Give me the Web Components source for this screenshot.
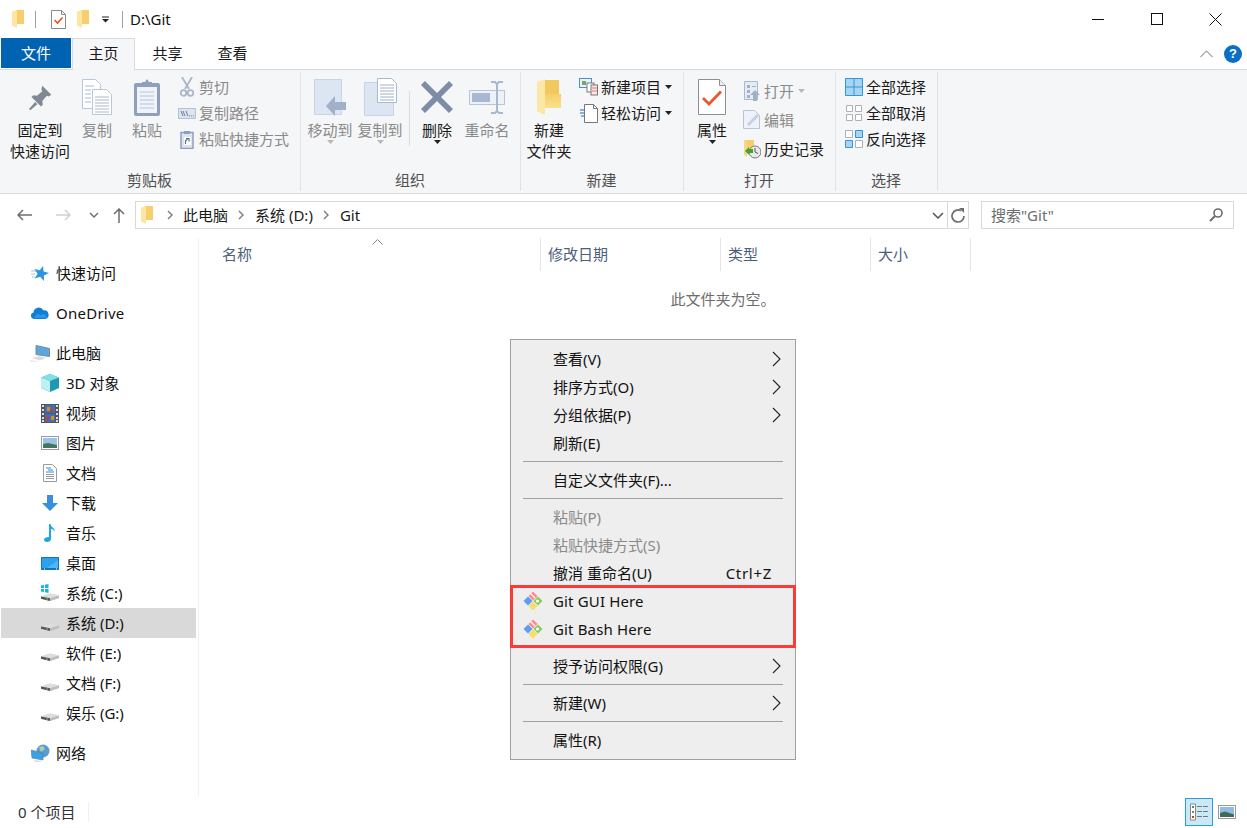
<!DOCTYPE html>
<html>
<head>
<meta charset="utf-8">
<title>D:\Git</title>
<style>
  html, body { margin: 0; height: 100%; background: #fff; overflow: hidden; }
  body { font: 15px/20px "Noto Sans", "Noto Sans CJK SC", sans-serif; color: #1a1a1a; }
</style>
</head>
<body>
<explorer-window>
  <title-bar slot="top"></title-bar>
  <ribbon-tabs slot="top"></ribbon-tabs>
  <ribbon-bar slot="top">
    <ribbon-group label="剪贴板" style="width:301px;padding-left:10px">
      <big-button icon="pin" style="width:60px">固定到<br>快速访问</big-button>
      <big-button icon="copy" off style="width:50px;margin-left:2px">复制</big-button>
      <big-button icon="paste" off style="width:50px">粘贴</big-button>
      <small-stack style="margin-left:5px;padding-top:4px">
        <small-button icon="cut" off>剪切</small-button>
        <small-button icon="copypath" off>复制路径</small-button>
        <small-button icon="pasteshort" off>粘贴快捷方式</small-button>
      </small-stack>
    </ribbon-group>
    <ribbon-group label="组织" style="width:220px;padding-left:5px">
      <big-button icon="moveto" off arrow style="width:48px">移动到</big-button>
      <big-button icon="copyto" off arrow style="width:50px;margin-left:1px">复制到</big-button>
      <ribbon-sep></ribbon-sep>
      <big-button icon="del" arrow style="width:50px;margin-left:2px">删除</big-button>
      <big-button icon="rename" off style="width:50px">重命名</big-button>
    </ribbon-group>
    <ribbon-group label="新建" style="width:163px;padding-left:5px">
      <big-button icon="bigfolder" style="width:46px">新建<br>文件夹</big-button>
      <small-stack style="margin-left:7px;padding-top:4px">
        <small-button icon="newitem" arrow="dark">新建项目</small-button>
        <small-button icon="easy" arrow="dark">轻松访问</small-button>
      </small-stack>
    </ribbon-group>
    <ribbon-group label="打开" style="width:152px;padding-left:12px">
      <big-button icon="props" arrow style="width:32px">属性</big-button>
      <small-stack tall style="margin-left:14px;padding-top:6px">
        <small-button icon="open" off arrow="light">打开</small-button>
        <small-button icon="edit" off>编辑</small-button>
        <small-button icon="history">历史记录</small-button>
      </small-stack>
    </ribbon-group>
    <ribbon-group label="选择" style="width:102px;padding-left:8px">
      <small-stack style="padding-top:4px">
        <small-button icon="selall">全部选择</small-button>
        <small-button icon="selnone">全部取消</small-button>
        <small-button icon="selinv">反向选择</small-button>
      </small-stack>
    </ribbon-group>
  </ribbon-bar>
  <address-row slot="top"></address-row>
  <nav-pane slot="side">
    <nav-item icon="star" gap>快速访问</nav-item>
    <nav-item icon="cloud" gap latin>OneDrive</nav-item>
    <nav-item icon="pc">此电脑</nav-item>
    <nav-item icon="cube" sub>3D 对象</nav-item>
    <nav-item icon="film" sub>视频</nav-item>
    <nav-item icon="photo" sub>图片</nav-item>
    <nav-item icon="docs" sub>文档</nav-item>
    <nav-item icon="down" sub>下载</nav-item>
    <nav-item icon="music" sub>音乐</nav-item>
    <nav-item icon="desk" sub>桌面</nav-item>
    <nav-item icon="cdrive" sub>系统 (C:)</nav-item>
    <nav-item icon="drive" sub selected>系统 (D:)</nav-item>
    <nav-item icon="drive" sub>软件 (E:)</nav-item>
    <nav-item icon="drive" sub>文档 (F:)</nav-item>
    <nav-item icon="drive" sub gap>娱乐 (G:)</nav-item>
    <nav-item icon="net">网络</nav-item>
  </nav-pane>
  <file-list slot="main"></file-list>
  <status-bar slot="bottom"></status-bar>
  <context-menu slot="over">
    <menu-row sub>查看(V)</menu-row>
    <menu-row sub>排序方式(O)</menu-row>
    <menu-row sub>分组依据(P)</menu-row>
    <menu-row>刷新(E)</menu-row>
    <menu-line></menu-line>
    <menu-row>自定义文件夹(F)...</menu-row>
    <menu-line></menu-line>
    <menu-row off>粘贴(P)</menu-row>
    <menu-row off>粘贴快捷方式(S)</menu-row>
    <menu-row keys="Ctrl+Z">撤消 重命名(U)</menu-row>
    <menu-mark>
      <menu-row git>Git GUI Here</menu-row>
      <menu-row git>Git Bash Here</menu-row>
    </menu-mark>
    <menu-row sub>授予访问权限(G)</menu-row>
    <menu-line></menu-line>
    <menu-row sub>新建(W)</menu-row>
    <menu-line></menu-line>
    <menu-row>属性(R)</menu-row>
  </context-menu>
</explorer-window>

<script>
// all the little pictures, each is [width, height, svg body]
const folderBody = '<path d="M4 0h8v14H4z" fill="#f6cf6c"/><path d="M0 1.500 5 0v18L0 15.500z" fill="#fde6a2"/>';
const driveBody = '<path d="M0 12.500 9 9.500 18 11.500v2.500L9 17 0 14.800z" fill="#c9c9c9"/><path d="M0 12.500 9 9.500 18 11.500 9 14.300z" fill="#dedede"/><path d="M0 12.500l9 1.800V17L0 14.800z" fill="#555"/><path d="M9 14.300 18 11.500V14L9 17z" fill="#bdbdbd"/><path d="M5 14.600h2v1H5z" fill="#6fc36f"/>';
const icons = {
  folder: [13, 18, folderBody],
  checkdoc: [15, 19, '<path d="M.5.5h10l4 4v14H.5z" fill="#fff" stroke="#8a8a8a"/><path d="M10.500.5v4h4" fill="none" stroke="#8a8a8a"/><path d="m3.500 10 3 3 5-5.500" fill="none" stroke="#e8501e" stroke-width="1.600"/>'],
  pin: [27, 27, '<g fill="#7f8a94" transform="scale(.9)"><path d="M17 2 27 12l-3 2-2-1-5 6 .5 4-2 2L5 14.500l2-2 4 .5 6-5-1-2z"/><path d="M9 20l2.500 2.500L4 29l-2-1z"/></g>'],
  copy: [30, 36, '<g stroke="#b9c7da" fill="#fff"><path d="M.5.5h13l5 5v24H.5z"/><path d="M10.500 10.500h14l5 5v20h-19z"/></g><path d="M3 7h9M3 11h6M3 15h6M3 19h6M3 23h6M13 18h14M13 21h14M13 24h14M13 27h14M13 30h14M13 33h14" stroke="#a9b9d0"/>'],
  paste: [26, 37, '<rect x="0" y="4" width="26" height="33" rx="2" fill="#8f9fbc"/><rect x="3" y="8" width="20" height="26" fill="#f0f4fa"/><path d="M6 13h14M6 17h14M6 21h14M6 25h14M6 29h14" stroke="#b4c2da"/><path d="M8 3h3l2-3 2 3h3v5H8z" fill="#8f9fbc"/>'],
  cut: [14, 20, '<g fill="none" stroke="#a9b6c9" stroke-width="1.800"><path d="M2 0l7 12M12 0 5 12"/><circle cx="3.500" cy="16" r="2.800"/><circle cx="10.500" cy="16" r="2.800"/></g>'],
  copypath: [18, 11, '<rect x=".5" y=".5" width="17" height="10" fill="#dde4ef" stroke="#b5c2d6"/><path d="M3 3l2 5M5 3l2 5M8 3l2 5" stroke="#6e7f9a"/><path d="M11 8h1M13 8h1M15 8h1" stroke="#6e7f9a"/>'],
  pasteshort: [14, 19, '<rect x="1" y="2.500" width="12" height="16" fill="#dce4f0" stroke="#8fa0bd" stroke-width="1.500"/><path d="M4 1h6v3H4z" fill="#8fa0bd"/><rect x="4" y="7" width="7" height="8" fill="#fff"/><path d="M5.500 14v-3l2-2M6 8.500h3v3" fill="none" stroke="#5c6f8f" stroke-width="1.200"/>'],
  moveto: [32, 37, '<path d="M.5.500h27v35H.5z" fill="#dce6f3" stroke="#c7d4e6"/><path d="M12 27 21 17v6h11v8H21v6z" fill="#9fb0c8"/>'],
  copyto: [33, 38, '<path d="M.5 4.500h29v33H.5z" fill="#dce6f3" stroke="#c7d4e6"/><path d="M13.500.500h14l5 5v19h-19z" fill="#fff" stroke="#a9b9d0"/><path d="M16 7h14M16 10h14M16 13h14M16 16h14M16 19h14M16 22h14" stroke="#9fb0c8"/>'],
  del: [32, 32, '<path d="M4 0 16 12 28 0l4 4-12 12 12 12-4 4-12-12L4 32l-4-4 12-12L0 4z" fill="#7f8ca8"/>'],
  rename: [36, 33, '<rect x=".5" y="9.500" width="35" height="14" fill="#edf2f8" stroke="#b7c5d9"/><rect x="3" y="12" width="18" height="9" fill="#a8b8d0"/><path d="M22 1h4l2 2 2-2h4M28 3v27M22 32h4l2-2 2 2h4" fill="none" stroke="#a8b8d0" stroke-width="2"/>'],
  bigfolder: [24, 36, '<defs><linearGradient id="bf" x2="0" y2="1"><stop offset="0" stop-color="#f6cf6c"/><stop offset="1" stop-color="#fbe08c"/></linearGradient></defs><path d="M7 1h15v28H7z" fill="#f3c95e"/><path d="M7 15h17v14H7z" fill="url(#bf)"/><path d="M0 3l8-3v36l-8-4z" fill="#fce7a6"/>'],
  newitem: [19, 18, '<rect x=".5" y=".5" width="12" height="9" fill="#e8f1fa" stroke="#4a93c9"/><rect x="3" y="3" width="4" height="4" fill="#7aa760"/><rect x="8" y="5" width="7" height="9" fill="#fff" stroke="#777"/><rect x="12" y="7" width="6.500" height="10" fill="#fde8e8" stroke="#777"/><path d="M13 10h5M13 13h5" stroke="#d77"/>'],
  easy: [18, 19, '<path d="M4.500.5h9l4 4v14h-13z" fill="#fff" stroke="#777"/><path d="M13.500.5v4h4" fill="none" stroke="#777"/><path d="M0 6h4M0 9h4M1 12h3" stroke="#1f6fb5"/>'],
  props: [28, 36, '<path d="M.5.500h21l6 6v29H.5z" fill="#fff" stroke="#8f8f8f"/><path d="M21.500.500v6h6" fill="#eee" stroke="#8f8f8f"/><path d="m5 19 6 6 12-12.500" fill="none" stroke="#e8582a" stroke-width="2.800"/>'],
  open: [16, 20, '<path d="M.5.500h13v18H.5z" fill="#e6ecf4" stroke="#a9b9d0"/><path d="M3 4h3v3H3zM3 9h3v3H3zM3 14h3v3H3zM8 5h4v1H8z" fill="#9fb0c8"/><path d="M11 9l5 5h-3v6H9v-6H6z" fill="#9fb0c8"/>'],
  edit: [18, 19, '<path d="M.5.500h11l5 5v13H.5z" fill="#eef2f8" stroke="#b7c5d9"/><path d="M4 14 14 4l2 2L6 16z" fill="#c3d0e2"/>'],
  history: [18, 20, '<path d="M1 1h3v17l-3-2z" fill="#f5d98a"/><path d="M4 1h7v12H4z" fill="#f6cf6c"/><circle cx="12" cy="13" r="6" fill="#e9e9e9" stroke="#777"/><path d="M12 9v4l3 1.500" fill="none" stroke="#555"/><path d="M2 12l4-4v2h4v4H6v2z" fill="#4aa02c"/>'],
  selall: [18, 18, '<path d="M.5.500h17v17H.5zM9 .5v17M.5 9h17" fill="#a8d4f2" stroke="#2f97df"/>'],
  selnone: [16, 16, '<path d="M.5.500h6v6h-6zM9.500.500h6v6h-6zM.5 9.500h6v6h-6zM9.500 9.500h6v6h-6z" fill="#fff" stroke="#b0b0b0"/>'],
  selinv: [18, 18, '<path d="M.5.500h7v7h-7zM10.500 10.500h7v7h-7z" fill="#fff" stroke="#b0b0b0"/><path d="M10.500.500h7v7h-7zM.5 10.500h7v7h-7z" fill="#a8d4f2" stroke="#2f97df"/>'],
  star: [18, 15, '<path d="M12 0 12.600 5.400 18 7 12.900 9.400 12.900 15 9.100 10.800 3.800 12.500 6.600 7.700 3.300 3.100 8.800 4.300z" fill="#2f94e0"/><path d="M0 5h5M0 8h4M1 11h3" stroke="#9ac8ec"/>'],
  cloud: [18, 12, '<path d="M3.500 12a3.300 3.300 0 0 1-1-6.500A5.200 5.200 0 0 1 12.300 3.300 4.500 4.500 0 0 1 14.500 12z" fill="#0f7ed6"/><path d="M2.500 11 6.500 6.500 9.500 8l4-1 3 4z" fill="#2b97ea"/>'],
  pc: [20, 17, '<path d="M6 .5 19.500 3.500v8L6 9.500z" fill="#5aa6e0" stroke="#7a8a96"/><path d="M2 13l7-2 7 2-6 2.500z" fill="#dcdcdc"/><path d="M0 15l6 .8 2 1L.5 17z" fill="#e9e9e9"/>'],
  cube: [18, 18, '<path d="M9 0 18 3.500V14L9 18 0 14V3.500z" fill="#1e9ab0"/><path d="M0 3.500 9 0l9 3.500L9 7z" fill="#7fe0e8"/><path d="M0 3.500 9 7v11L0 14z" fill="#bdf0f2"/>'],
  film: [18, 19, '<rect width="18" height="19" fill="#555"/><path d="M1 1h2v2H1zM1 5h2v2H1zM1 9h2v2H1zM1 13h2v2H1zM1 16h2v2H1zM15 1h2v2h-2zM15 5h2v2h-2zM15 9h2v2h-2zM15 13h2v2h-2zM15 16h2v2h-2z" fill="#ddd"/><rect x="4" y="1" width="10" height="8" fill="#3f6fb8"/><rect x="4" y="10" width="10" height="8" fill="#3f6fb8"/><path d="M6 3h3v4H6zM10 12h3v4h-3z" fill="#d98a2b"/><path d="M9 5h3v3H9zM5 13h3v4H5z" fill="#b5413a"/>'],
  photo: [18, 14, '<rect x=".5" y=".5" width="17" height="13" fill="#fff" stroke="#9a9a9a"/><rect x="2" y="2" width="14" height="10" fill="#9cc3e6"/><path d="M2 8l5-1 9 2v3H2z" fill="#45735f"/>'],
  docs: [14, 18, '<path d="M.5.500h9l4 4v13H.5z" fill="#fff" stroke="#9a9a9a"/><path d="M3 4h5M5 6h5M3 8h8" stroke="#2f8bd8"/><path d="M3 10.500h8M3 12.500h8M3 14.500h8" stroke="#999"/>'],
  down: [16, 16, '<path d="M5 0h6v8h5l-8 8-8-8h5z" fill="#3a8fdc"/>'],
  music: [12, 18, '<path d="M5 0h1.500c.3 3 4.500 4 4.500 8-1-2-2.500-3-4-3v10c0 2-2 3-4 3s-3-1-3-2.500S2 13 5 13z" fill="#1ea7e8"/>'],
  desk: [18, 13, '<rect width="18" height="13" fill="#1377bd"/><path d="M1 1h16v10H1z" fill="#2ea1ee"/><path d="M6 11 17 3v8z" fill="#52b4f3"/><path d="M3 12h1M15 12h1" stroke="#fff"/>'],
  drive: [18, 18, driveBody],
  cdrive: [18, 18, driveBody + '<path d="M0 1.500 3 1v3H0zM4 .8 7.500 0v4H4zM0 5h3v3l-3-.5zM4 5h3.500v4L4 8.300z" fill="#12b5ea"/>'],
  net: [19, 18, '<circle cx="12" cy="7" r="6.500" fill="#5b9bd0"/><path d="M8 3l4-1 2 3-4 3z" fill="#a9d0a8"/><path d="M0 6l12 3v7L1 14z" fill="#3aa1e4" stroke="#5a7c96" stroke-width=".6"/><path d="M3 16l8 1-2 1H4z" fill="#ddd"/>'],
  git: [20, 20, '<path d="M10 .5 14.500 5 10 9.500 5.500 5z" fill="#fb8a8a"/><path d="M7.500 2.500 12 7" stroke="#fff" stroke-width="1.200"/><path d="M5 5.500 9.500 10 5 14.500.5 10z" fill="#5b9df5"/><path d="M15 5.500 19.500 10 15 14.500 10.500 10z" fill="#86cc5e"/><circle cx="14.500" cy="10" r="1.600" fill="#fff"/><path d="M10 10.500 14.500 15 10 19.500 5.500 15z" fill="#f8dd66"/>'],
  details: [18, 18, '<path d="M.5 1h5v16h-5z" fill="#fff" stroke="#888"/><path d="M2 3h2v2H2z" fill="#3a8fa5"/><path d="M2 8h2v2H2z" fill="#9a8a25"/><path d="M2 13h2v2H2z" fill="#c9402a"/><path d="M7 2.500h5M13 2.500h5M7 7.500h5M13 7.500h5M7 12.500h5M13 12.500h5" transform="translate(0 1)" stroke="#777" stroke-width="1.200"/>'],
  thumbs: [18, 14, '<rect x=".5" y=".5" width="17" height="13" fill="#fff" stroke="#9a9a9a"/><rect x="2" y="2" width="14" height="10" fill="#8fbde6"/><path d="M2 8l5-1.500 9 3V12H2z" fill="#3f6b58"/>']
};

function svgFor(name) {
  const i = icons[name];
  return `<svg width="${i[0]}" height="${i[1]}" viewBox="0 0 ${i[0]} ${i[1]}" style="display:block;flex:none">${i[2]}</svg>`;
}

// small helper, most elements are only a template string
function define(tag, css, html, setup) {
  customElements.define(tag, class extends HTMLElement {
    connectedCallback() {
      if (this.shadowRoot) return;
      this.attachShadow({ mode: 'open' });
      const body = typeof html === 'function' ? html(this) : html;
      this.shadowRoot.innerHTML = `<style>${css}</style>${body}`;
      if (setup) setup(this);
    }
  });
}

define('explorer-window', `
  :host { display: block; position: relative; width: 1247px; height: 828px; overflow: hidden; background: #fff; }
  .all { display: flex; flex-direction: column; height: 100%; }
  .mid { flex: 1; display: flex; min-height: 0; }
`, `<div class="all">
  <slot name="top"></slot>
  <div class="mid"><slot name="side"></slot><slot name="main"></slot></div>
  <slot name="bottom"></slot>
</div><slot name="over"></slot>`);

define('title-bar', `
  :host { display: flex; align-items: center; height: 38px; flex: none; box-sizing: border-box; }
  .sep { width: 1px; height: 17px; background: #a0a0a0; }
  .ttl { margin-left: 7px; color: #111; }
  .ctl { margin-left: auto; display: flex; padding-right: 2px; }
  .ctl div { width: 59px; height: 38px; display: flex; align-items: center; justify-content: center; }
  .arrow { width: 7px; height: 7px; }
`, () => `
  <span style="margin-left:12px">${svgFor('folder')}</span>
  <span class="sep" style="margin-left:10px"></span>
  <span style="margin-left:15px">${svgFor('checkdoc')}</span>
  <span style="margin-left:11px">${svgFor('folder')}</span>
  <svg class="arrow" style="margin-left:12px" viewBox="0 0 7 7"><path d="M0 1h7" stroke="#222"/><path d="M0 3h7L3.500 6.500z" fill="#222"/></svg>
  <span class="sep" style="margin-left:13px"></span>
  <span class="ttl">D:\\Git</span>
  <div class="ctl">
    <div><svg width="12" height="12"><path d="M0 6.500h12" stroke="#111"/></svg></div>
    <div><svg width="12" height="12"><rect x=".5" y=".5" width="11" height="11" fill="none" stroke="#111"/></svg></div>
    <div><svg width="13" height="13"><path d="M.5.500l12 12M12.500.500l-12 12" stroke="#111" fill="none"/></svg></div>
  </div>`);

define('ribbon-tabs', `
  :host { display: flex; height: 32px; flex: none; box-sizing: border-box; padding-left: 1px; border-bottom: 1px solid #dadbdc; position: relative; }
  .t { display: flex; align-items: center; justify-content: center; height: 31px; box-sizing: border-box; }
  .file { width: 70px; height: 30px; background: #0063b1; color: #fff; }
  .home { width: 63px; height: 32px; background: #f5f6f7; border: 1px solid #dadbdc; border-bottom: 0; margin-left: 1px; padding-bottom: 3px; z-index: 1; }
  .other { width: 65px; padding-bottom: 2px; }
  .r { margin-left: auto; display: flex; align-items: center; gap: 11px; padding-right: 5px; height: 31px; }
  .help { width: 18px; height: 18px; border-radius: 50%; background: #0a6fc5; color: #fff; font: bold 13px/18px "Liberation Sans", sans-serif; text-align: center; }
`, `
  <div class="t file">文件</div>
  <div class="t home">主页</div>
  <div class="t other">共享</div>
  <div class="t other">查看</div>
  <div class="r">
    <svg width="13" height="8"><path d="M.5 7 6.500 1l6 6" fill="none" stroke="#a8a8a8" stroke-width="1.200"/></svg>
    <div class="help">?</div>
  </div>`);

define('ribbon-bar', `
  :host { display: flex; height: 124px; flex: none; box-sizing: border-box; background: #f5f6f7; border-bottom: 1px solid #dadbdc; }
`, `<slot></slot>`);

define('ribbon-group', `
  :host { display: flex; flex-direction: column; box-sizing: border-box; height: 123px; flex: none; position: relative; }
  :host::after { content: ''; position: absolute; right: 0; top: 2px; bottom: 2px; width: 1px; background: #e1e2e3; }
  .body { flex: 1; display: flex; min-height: 0; }
  .lab { height: 22px; margin: 0 0 2px; padding-right: 2px; text-align: center; color: #505050; line-height: 22px; }
`, el => `<div class="body"><slot></slot></div>`, el => {
  // the label is centred over the whole group, not the padded part
  const lab = document.createElement('div');
  lab.className = 'lab';
  lab.textContent = el.getAttribute('label');
  const pad = parseInt(el.style.paddingLeft) || 0;
  lab.style.marginLeft = -pad + 'px';
  el.shadowRoot.appendChild(lab);
});

define('ribbon-sep', `
  :host { display: block; width: 1px; height: 55px; margin: 21px 0 0 4px; background: #dcdddf; flex: none; }
`, ``);

define('big-button', `
  :host { display: flex; flex-direction: column; align-items: center; flex: none; white-space: nowrap; color: #1a1a1a; }
  :host([off]) { color: #8a8a8a; }
  .ic { height: 50px; padding-top: 4px; box-sizing: border-box; display: flex; align-items: center; justify-content: center; width: 100%; }
  .tx { line-height: 21px; text-align: center; }
  .ar { margin-top: -1px; }
`, el => `
  <div class="ic">${svgFor(el.getAttribute('icon'))}</div>
  <div class="tx"><slot></slot></div>
  ${el.hasAttribute('arrow') ? `<svg class="ar" width="7" height="4"><path d="M0 0h7L3.500 4z" fill="${el.hasAttribute('off') ? '#b8b8b8' : '#222'}"/></svg>` : ''}`);

define('small-stack', `
  :host { display: flex; flex-direction: column; gap: 0; --row: 26px; }
  :host([tall]) { --row: 29px; }
`, `<slot></slot>`);

define('small-button', `
  :host { display: flex; align-items: center; height: var(--row, 26px); white-space: nowrap; color: #1a1a1a; }
  :host([off]) { color: #8a8a8a; }
  .ic { width: 21px; display: flex; align-items: center; justify-content: center; flex: none; margin-right: 1px; box-sizing: border-box; padding-right: 2px; }
  .ar { margin-left: 4px; }
`, el => {
  const a = el.getAttribute('arrow');
  return `<div class="ic">${svgFor(el.getAttribute('icon'))}</div><slot></slot>` +
    (a ? `<svg class="ar" width="7" height="4"><path d="M0 0h7L3.500 4z" fill="${a === 'dark' ? '#222' : '#b8b8b8'}"/></svg>` : '');
});

define('address-row', `
  :host { display: flex; align-items: center; height: 44px; flex: none; box-sizing: border-box; padding-bottom: 2px; }
  svg { display: block; flex: none; }
  .box { height: 28px; box-sizing: border-box; border: 1px solid #d9d9d9; display: flex; align-items: center; }
  .addr { width: 834px; margin-left: 10px; }
  .find { width: 253px; margin-left: 12px; color: #6d6d6d; padding-left: 9px; justify-content: space-between; padding-right: 10px; }
  .cr { margin: 0 10px; }
  .end { margin-left: auto; display: flex; align-items: center; height: 100%; }
  .rf { border-left: 1px solid #d9d9d9; height: 100%; width: 20px; display: flex; align-items: center; justify-content: center; margin-left: 3px; }
`, () => {
  const crumb = '<svg class="cr" width="6" height="10"><path d="M1 1l4 4-4 4" fill="none" stroke="#7a7a7a" stroke-width="1.400"/></svg>';
  return `
  <svg style="margin-left:17px" width="15" height="12"><path d="M6 1 1 6l5 5M1 6h14" fill="none" stroke="#6d6d6d" stroke-width="1.500"/></svg>
  <svg style="margin-left:24px" width="15" height="12"><path d="M9 1l5 5-5 5M14 6H0" fill="none" stroke="#d0d0d0" stroke-width="1.500"/></svg>
  <svg style="margin-left:18px" width="10" height="6"><path d="M1 1l4 4 4-4" fill="none" stroke="#6d6d6d" stroke-width="1.400"/></svg>
  <svg style="margin-left:14px" width="12" height="15"><path d="M1 6l5-5 5 5M6 1v14" fill="none" stroke="#6d6d6d" stroke-width="1.500"/></svg>
  <div class="box addr">
    <span style="margin-left:5px">${svgFor('folder')}</span>
    <span style="margin-left:3px;display:flex">${crumb}</span>
    <span>此电脑</span>${crumb}<span style="margin-left:1px">系统 (D:)</span>${crumb}<span style="margin-left:1px">Git</span>
    <div class="end">
      <svg width="12" height="7"><path d="M1 1l5 5 5-5" fill="none" stroke="#555" stroke-width="1.500"/></svg>
      <div class="rf"><svg width="14" height="15"><path d="M10 2.800A6 6 0 1 0 13 8" fill="none" stroke="#6d6d6d" stroke-width="1.700"/><path d="M8 0h5v5z" fill="#6d6d6d"/></svg></div>
    </div>
  </div>
  <div class="box find"><span>搜索"Git"</span>
    <svg width="14" height="14"><circle cx="9" cy="5" r="4" fill="none" stroke="#6d6d6d" stroke-width="1.600"/><path d="M6 8l-5 5" stroke="#6d6d6d" stroke-width="2"/></svg>
  </div>`;
});

define('nav-pane', `
  :host { display: block; width: 199px; flex: none; box-sizing: border-box; padding: 20px 2px 0 1px; border-right: 1px solid #f0f0f0; }
`, `<slot></slot>`);

define('nav-item', `
  :host { display: flex; align-items: center; height: 30px; white-space: nowrap; color: #111; padding-left: 29px; }
  :host([sub]) { padding-left: 39px; }
  :host([gap]) { margin-bottom: 10px; }
  :host([selected]) { background: #d9d9d9; }
  :host([latin]) { letter-spacing: .25px; }
  .ic { width: 22px; margin-right: 4px; display: flex; justify-content: center; flex: none; box-sizing: border-box; padding-right: 2px; }
`, el => `<div class="ic">${svgFor(el.getAttribute('icon'))}</div><slot></slot>`);

define('file-list', `
  :host { display: block; flex: 1; position: relative; }
  .head { display: grid; grid-template-columns: 342px 180px 150px 100px; height: 32px; color: #4c607a; }
  .head div { border-right: 1px solid #e5e5e5; padding-left: 7px; line-height: 33px; position: relative; }
  .head div:first-child { padding-left: 23px; }
  .sort { position: absolute; left: 173px; top: 1px; }
  .empty { text-align: center; color: #6d6d6d; margin-top: 19px; }
`, `
  <div class="head">
    <div>名称<svg class="sort" width="11" height="6"><path d="M.5 5.500l5-5 5 5" fill="none" stroke="#8a8a8a"/></svg></div>
    <div>修改日期</div><div>类型</div><div>大小</div>
  </div>
  <div class="empty">此文件夹为空。</div>`);

define('status-bar', `
  :host { display: flex; align-items: center; height: 32px; flex: none; color: #333; padding-left: 18px; }
  .cnt { width: 70px; border-right: 1px solid #f0f0f0; height: 20px; }
  .v { margin-left: auto; display: flex; align-items: center; margin-right: 11px; }
  .on { width: 28px; height: 28px; box-sizing: border-box; border: 1px solid #26a0da; background: #cbe8f6; display: flex; align-items: center; justify-content: center; margin-right: 5px; }
`, () => `<div class="cnt">0 个项目</div>
  <div class="v"><div class="on">${svgFor('details')}</div>${svgFor('thumbs')}</div>`);

define('context-menu', `
  :host { display: block; position: absolute; left: 510px; top: 339px; width: 286px; box-sizing: border-box; border: 1px solid #a0a0a0; background: #eeeeee; padding: 5px 0; }
`, `<slot></slot>`);

define('menu-row', `
  :host { display: flex; align-items: center; height: 28px; padding-left: 42px; white-space: nowrap; color: #111; position: relative; }
  :host([off]) { color: #8a8a8a; }
  :host([git]) { letter-spacing: .15px; }
  .g { position: absolute; left: 12px; top: 4px; }
  .k { margin-left: auto; padding-right: 23px; letter-spacing: .7px; }
  .s { margin-left: auto; padding-right: 14px; }
`, el => `
  ${el.hasAttribute('git') ? `<span class="g">${svgFor('git')}</span>` : ''}
  <slot></slot>
  ${el.hasAttribute('keys') ? `<span class="k">${el.getAttribute('keys')}</span>` : ''}
  ${el.hasAttribute('sub') ? '<svg class="s" width="9" height="16" style="box-sizing:content-box"><path d="M1 1l7 7-7 7" fill="none" stroke="#222" stroke-width="1.100"/></svg>' : ''}`);

define('menu-line', `
  :host { display: block; height: 1px; margin: 4px 12px; background: #a0a0a0; }
`, ``);

// red box drawn by the screenshot's author around the git rows
define('menu-mark', `
  :host { display: block; position: relative; margin-bottom: 9px; }
  :host::after { content: ''; position: absolute; left: -1px; right: -1px; top: -2px; bottom: -5px; border: 3px solid #fb3a3a; }
`, `<slot></slot>`);
</script>
</body>
</html>
